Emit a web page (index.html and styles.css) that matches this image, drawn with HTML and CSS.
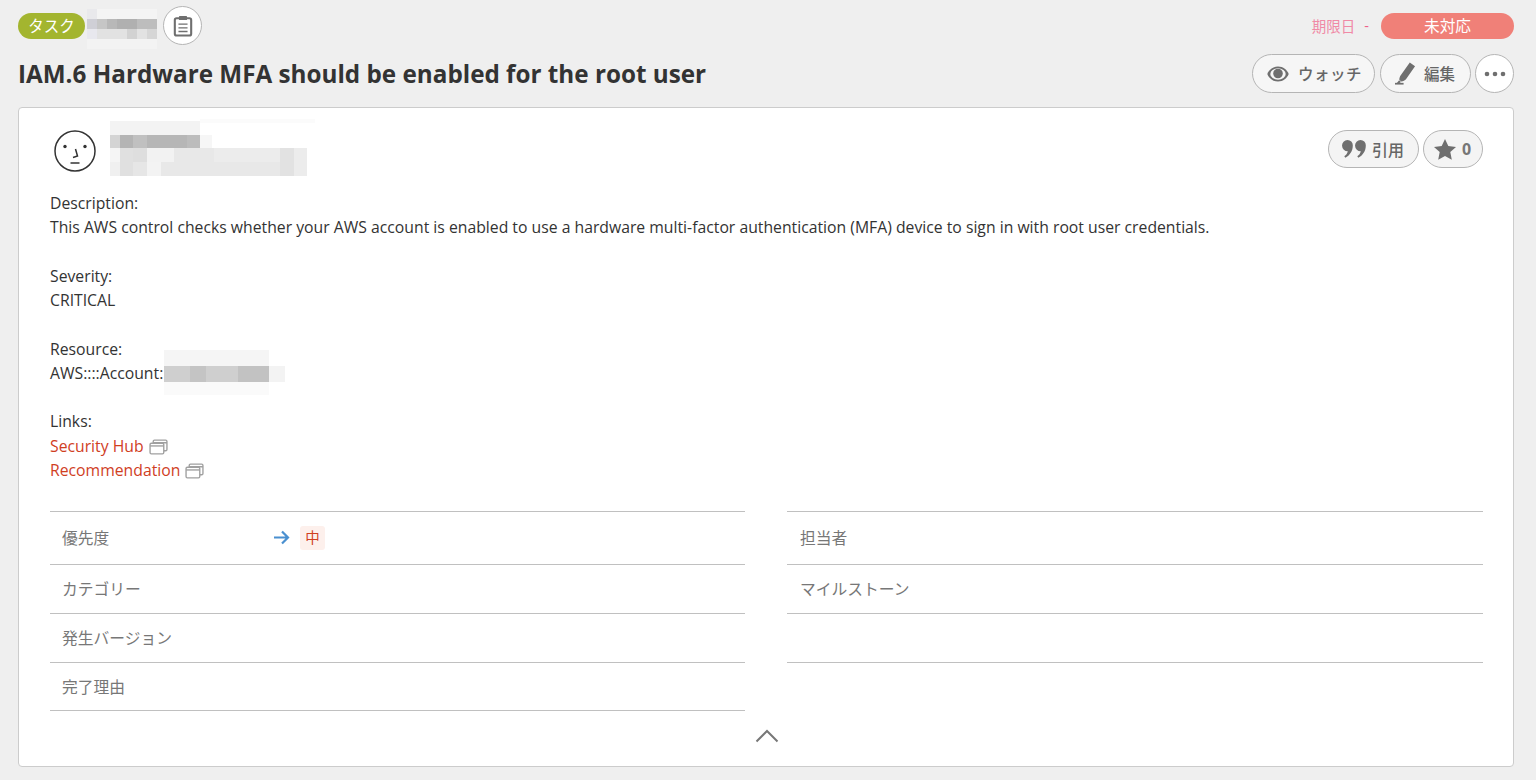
FILE: index.html
```html
<!DOCTYPE html>
<html lang="ja">
<head>
<meta charset="utf-8">
<title>IAM.6</title>
<link rel="stylesheet" href="styles.css">
</head>
<body>
<header class="head">
  <div class="head-row">
    <div class="head-left">
      <span class="badge-task">タスク</span>
      <svg class="blur-key" viewBox="0 0 70 40" aria-hidden="true">
        <g shape-rendering="crispEdges">
          <rect x="0" y="0" width="70" height="10" fill="#e9e9ec"/>
          <rect x="10" y="0" width="60" height="10" fill="#f4f4f4"/>
          <rect x="0" y="10" width="10" height="10" fill="#cfcfd6"/>
          <rect x="10" y="10" width="10" height="10" fill="#c6c6c6"/>
          <rect x="20" y="10" width="10" height="10" fill="#b8b8b8"/>
          <rect x="30" y="10" width="20" height="10" fill="#b0b0b0"/>
          <rect x="50" y="10" width="20" height="10" fill="#bdbdbd"/>
          <rect x="0" y="20" width="70" height="10" fill="#e2e2e2"/>
          <rect x="0" y="20" width="10" height="10" fill="#e8e8ee"/>
          <rect x="40" y="20" width="10" height="10" fill="#d2d2d2"/>
          <rect x="60" y="20" width="10" height="10" fill="#d6d6d6"/>
          <rect x="0" y="30" width="70" height="10" fill="#f3f3f3"/>
        </g>
      </svg>
      <button class="round-btn" type="button" aria-label="コピー">
        <svg class="icon-clip" viewBox="0 0 22 24">
          <rect x="2" y="3.500" width="18" height="19" rx="2" fill="none" stroke="#6f6f6f" stroke-width="2.300"/>
          <rect x="6.500" y="1" width="9" height="4.500" rx="1" fill="#6f6f6f"/>
          <path d="M6 10h10M6 14h10M6 18h10" stroke="#6f6f6f" stroke-width="1.500" fill="none"/>
        </svg>
      </button>
    </div>
    <div class="head-right">
      <span class="due">期限日</span>
      <span class="due-val">-</span>
      <span class="status">未対応</span>
    </div>
  </div>
  <div class="title-row">
    <h1 class="title">IAM.6 Hardware MFA should be enabled for the root user</h1>
    <div class="actions">
      <button class="pill-btn btn-watch" type="button">
        <svg class="icon-eye" viewBox="0 0 22 16">
          <path d="M11 .5C5.800.5 1.800 4 .3 8c1.500 4 5.500 7.500 10.700 7.500S20.200 12 21.700 8C20.200 4 16.200.5 11 .5z" fill="#6f6f6f"/>
          <ellipse cx="11" cy="8" rx="7.700" ry="5.700" fill="#f6f6f6"/>
          <circle cx="11" cy="7.500" r="4.800" fill="#6f6f6f"/>
        </svg>
        <span class="wide">ウォッチ</span>
      </button>
      <button class="pill-btn btn-edit" type="button">
        <svg class="icon-pen" viewBox="0 0 22 24">
          <path d="M15.500.5l5.500 4-9.500 13.500c-1 1.300-3 2.300-5 2.500L4.500 18.500c0-2 .7-3.700 1.700-5z" fill="#6f6f6f"/>
          <path d="M0 22.700h9" stroke="#6f6f6f" stroke-width="1.800"/>
          <path d="M4.300 19l2 2-2.500 1.500H1.500z" fill="#6f6f6f"/>
        </svg>
        <span>編集</span>
      </button>
      <button class="round-btn" type="button" aria-label="その他">
        <svg class="icon-more" viewBox="0 0 22 6">
          <circle cx="3" cy="3" r="2.300" fill="#6f6f6f"/>
          <circle cx="11" cy="3" r="2.300" fill="#6f6f6f"/>
          <circle cx="19" cy="3" r="2.300" fill="#6f6f6f"/>
        </svg>
      </button>
    </div>
  </div>
</header>

<main class="card">
  <div class="author-row">
    <div class="author">
      <svg class="avatar" viewBox="0 0 42 42">
        <circle cx="21" cy="21" r="20" fill="#fff" stroke="#333" stroke-width="1.500"/>
        <circle cx="11" cy="16.500" r="1.700" fill="#333"/>
        <circle cx="31" cy="16.500" r="1.700" fill="#333"/>
        <path d="M21.500 19l2 7-4.500 1.500" fill="none" stroke="#333" stroke-width="1.500"/>
        <path d="M16.500 33h9" stroke="#333" stroke-width="1.500"/>
      </svg>
      <svg class="blur-author" viewBox="0 0 205 58" aria-hidden="true">
        <g shape-rendering="crispEdges">
          <rect x="0" y="2" width="90" height="14" fill="#f3f3f3"/>
          <rect x="90" y="0" width="115" height="4" fill="#fbfbfb"/>
          <rect x="0" y="16" width="10" height="13" fill="#d4d4d4"/>
          <rect x="10" y="16" width="13" height="13" fill="#b4b4b4"/>
          <rect x="23" y="16" width="14" height="13" fill="#c0c0c0"/>
          <rect x="37" y="16" width="40" height="13" fill="#b6b6b6"/>
          <rect x="77" y="16" width="13" height="13" fill="#bcbcbc"/>
          <rect x="90" y="16" width="12" height="13" fill="#f6f6f6"/>
          <rect x="0" y="29" width="197" height="14" fill="#ececec"/>
          <rect x="0" y="29" width="10" height="14" fill="#f5f5f5"/>
          <rect x="10" y="29" width="13" height="28" fill="#e0e0e0"/>
          <rect x="23" y="29" width="14" height="14" fill="#dedede"/>
          <rect x="37" y="29" width="27" height="14" fill="#f2f2f2"/>
          <rect x="64" y="29" width="40" height="14" fill="#e8e8e8"/>
          <rect x="170" y="29" width="14" height="28" fill="#e2e2e2"/>
          <rect x="0" y="43" width="10" height="14" fill="#f0f0f0"/>
          <rect x="23" y="43" width="14" height="14" fill="#e6e6e6"/>
          <rect x="37" y="43" width="14" height="14" fill="#f3f3f3"/>
          <rect x="51" y="43" width="119" height="14" fill="#e8e8e8"/>
          <rect x="184" y="43" width="13" height="14" fill="#ececec"/>
        </g>
      </svg>
    </div>
    <div class="author-actions">
      <button class="pill-btn small btn-quote" type="button">
        <svg class="icon-quote" viewBox="0 0 24 18">
          <path d="M5.500 0a5.300 5.300 0 0 1 5.300 5.500c0 5.500-3 10-7.500 12.300l-1-1.500c1.800-1.300 3-2.900 3.500-5.100A5.300 5.300 0 0 1 5.500 0zM18.500 0a5.300 5.300 0 0 1 5.300 5.500c0 5.500-3 10-7.500 12.300l-1-1.500c1.800-1.300 3-2.900 3.500-5.100A5.300 5.300 0 0 1 18.500 0z" fill="#6f6f6f"/>
        </svg>
        <span>引用</span>
      </button>
      <button class="pill-btn small btn-star" type="button">
        <svg class="icon-star" viewBox="0 0 22 21">
          <path d="M11 0l3.300 7 7.700.9-5.700 5.200 1.500 7.600L11 17l-6.800 3.700 1.500-7.600L0 7.900 7.700 7z" fill="#6f6f6f"/>
        </svg>
        <b class="count">0</b>
      </button>
    </div>
  </div>

  <div class="desc">
    <p>Description:<br>This AWS control checks whether your AWS account is enabled to use a hardware multi-factor authentication (MFA) device to sign in with root user credentials.</p>
    <p>Severity:<br>CRITICAL</p>
    <p>Resource:<br>AWS::::Account:<svg class="blur-acct" viewBox="0 0 121 45" aria-hidden="true">
      <g shape-rendering="crispEdges">
        <rect x="0" y="0" width="105" height="16" fill="#f5f5f5"/>
        <rect x="0" y="16" width="105" height="16" fill="#cfcfcf"/>
        <rect x="26" y="16" width="16" height="16" fill="#c4c4c4"/>
        <rect x="74" y="16" width="31" height="16" fill="#c2c2c2"/>
        <rect x="105" y="16" width="16" height="16" fill="#f3f3f3"/>
        <rect x="0" y="32" width="105" height="13" fill="#fafafa"/>
      </g>
    </svg></p>
    <p>Links:<br>
      <a class="ext" href="#">Security Hub</a>
      <svg class="icon-ext" viewBox="0 0 18 15"><path d="M4 4V2.200C4 1.500 4.500 1 5.200 1h10.600c.7 0 1.200.5 1.200 1.200v7.600c0 .7-.5 1.200-1.200 1.200H14M4 3.500h13" fill="none" stroke="#a0a0a0" stroke-width="1.300"/><rect x="1" y="4" width="13" height="10" rx="1.200" fill="#fff" stroke="#a0a0a0" stroke-width="1.300"/><path d="M1 6.500h13" stroke="#a0a0a0" stroke-width="1.300"/></svg><br>
      <a class="ext" href="#">Recommendation</a>
      <svg class="icon-ext" viewBox="0 0 18 15"><path d="M4 4V2.200C4 1.500 4.500 1 5.200 1h10.600c.7 0 1.200.5 1.200 1.200v7.600c0 .7-.5 1.200-1.200 1.200H14M4 3.500h13" fill="none" stroke="#a0a0a0" stroke-width="1.300"/><rect x="1" y="4" width="13" height="10" rx="1.200" fill="#fff" stroke="#a0a0a0" stroke-width="1.300"/><path d="M1 6.500h13" stroke="#a0a0a0" stroke-width="1.300"/></svg>
    </p>
  </div>

  <div class="props">
    <dl class="col">
      <div class="prop first">
        <dt>優先度</dt>
        <dd class="priority">
          <svg class="icon-arrow" viewBox="0 0 17 15"><path d="M1 7.500h14M9 1.500l6 6-6 6" fill="none" stroke="#4a90d0" stroke-width="2.200"/></svg>
          <span class="prio-badge">中</span>
        </dd>
      </div>
      <div class="prop"><dt>カテゴリー</dt><dd></dd></div>
      <div class="prop"><dt>発生バージョン</dt><dd></dd></div>
      <div class="prop closing"><dt>完了理由</dt><dd></dd></div>
    </dl>
    <dl class="col">
      <div class="prop first"><dt>担当者</dt><dd></dd></div>
      <div class="prop"><dt>マイルストーン</dt><dd></dd></div>
      <div class="prop"><dt></dt><dd></dd></div>
      <div class="prop rule"></div>
    </dl>
  </div>

  <div class="collapse">
    <svg class="icon-chev" viewBox="0 0 24 14"><path d="M1.500 12.500L12 2l10.500 10.500" fill="none" stroke="#777" stroke-width="2"/></svg>
  </div>
</main>
</body>
</html>
```
FILE: styles.css
```css
* { box-sizing: border-box; }
html, body { margin: 0; padding: 0; }
body {
  width: 1536px;
  height: 780px;
  overflow: hidden;
  background: #efefef;
  color: #333;
  font-family: "Open Sans", "Noto Sans CJK JP", sans-serif;
  font-size: 15.760px;
  padding: 6px 22px 0 18px;
}
.head-row {
  display: flex;
  justify-content: space-between;
  align-items: center;
  height: 39px;
}
.head-left, .head-right, .actions, .author-actions, .author, .priority {
  display: flex;
  align-items: center;
}
.badge-task {
  width: 67px;
  height: 26px;
  border-radius: 13px;
  background: #a3b52f;
  color: #fff;
  font-size: 15.500px;
  line-height: 26px;
  text-align: center;
}
.blur-key { display: block; width: 70px; height: 40px; margin: 7px 6px 0 2px; filter: blur(.6px); }
.round-btn {
  display: flex;
  align-items: center;
  justify-content: center;
  width: 39px;
  height: 39px;
  padding: 0;
  border: 1px solid #b5b5b5;
  border-radius: 50%;
  background: #fff;
}
.icon-clip { width: 20px; height: 22px; }
.icon-more { width: 22px; height: 6px; }
.due { color: #f08aa6; font-size: 14.500px; margin-left: 1px; }
.due-val { color: #ee5f8a; font-size: 14.500px; margin: 0 12px 0 9px; }
.status {
  width: 133px;
  height: 26px;
  border-radius: 13px;
  background: #f08078;
  color: #fff;
  font-size: 15.700px;
  line-height: 26px;
  text-align: center;
}
.title-row {
  display: flex;
  justify-content: space-between;
  align-items: center;
  height: 39px;
  margin-top: 9px;
}
.title {
  margin: 0;
  font-size: 24.260px;
  font-weight: 700;
  color: #333;
}
.actions { gap: 5px; }
.actions .round-btn { margin-left: -1px; }
.pill-btn {
  display: flex;
  align-items: center;
  height: 39px;
  padding: 0;
  border: 1px solid #b5b5b5;
  border-radius: 20px;
  background: #fff;
  color: #666;
  font-family: inherit;
  font-size: 15.500px;
  font-weight: 500;
}
.btn-watch { width: 123px; padding-left: 14px; gap: 9px; background: #f6f6f6; }
.btn-edit { width: 91px; padding-left: 14px; gap: 8px; background: #f6f6f6; }
.wide { letter-spacing: .5px; }
.icon-eye { width: 22px; height: 16px; }
.icon-pen { width: 21px; height: 23px; }
.card {
  height: 660px;
  margin-top: 14px;
  padding: 22px 30px 0 31px;
  border: 1px solid #ccc;
  border-radius: 4px;
  background: #fff;
}
.author-row {
  display: flex;
  justify-content: space-between;
  align-items: flex-start;
  height: 61px;
}
.author { gap: 14px; margin-left: 4px; margin-top: -11px; }
.avatar { width: 42px; height: 42px; margin-top: 6px; }
.blur-author { display: block; width: 205px; height: 58px; filter: blur(.6px); }
.author-actions { gap: 4px; }
.pill-btn.small { height: 38px; background: #f4f4f4; font-size: 16px; }
.btn-quote { width: 91px; padding-left: 13px; gap: 6px; }
.btn-star { width: 60px; padding-left: 10px; gap: 6px; }
.icon-quote { width: 24px; height: 18px; }
.icon-star { width: 22px; height: 21px; }
.count { font-family: "Open Sans", sans-serif; font-size: 16px; color: #777; }
.desc { line-height: 24.250px; color: #333; }
.desc p { margin: 0 0 24.320px; }
.blur-acct { width: 121px; height: 45px; vertical-align: middle; margin: -14px 0 -10px 1px; filter: blur(.6px); }
.ext { color: #d0401f; text-decoration: none; }
.icon-ext { width: 19px; height: 16px; vertical-align: 1px; margin: -4px 0 -4px 1px; }
.props {
  display: grid;
  grid-template-columns: 695px 696px;
  column-gap: 42px;
  margin-top: 28.300px;
}
.col { margin: 0; }
.prop {
  display: flex;
  align-items: center;
  height: 48.800px;
  padding: 0 12px;
  border-top: 1px solid #c0c0c0;
  color: #777;
  font-size: 15.760px;
}
.col:last-child .prop { padding-left: 13px; }
.prop.first { height: 53.500px; }
.prop.closing { height: 49.500px; border-bottom: 1px solid #c0c0c0; }
.prop.rule { height: 1px; padding: 0; }
.prop dt { width: 211px; }
.prop dd { margin: 0; }
.priority { gap: 10px; margin-top: 2px; }
.icon-arrow { width: 17px; height: 15px; }
.prio-badge {
  width: 25px;
  height: 24px;
  border-radius: 3px;
  background: #fdf0ec;
  color: #d0401f;
  font-size: 14.500px;
  line-height: 24px;
  text-align: center;
}
.collapse { display: flex; justify-content: center; margin-top: 18px; }
.icon-chev { width: 24px; height: 14px; }
```
